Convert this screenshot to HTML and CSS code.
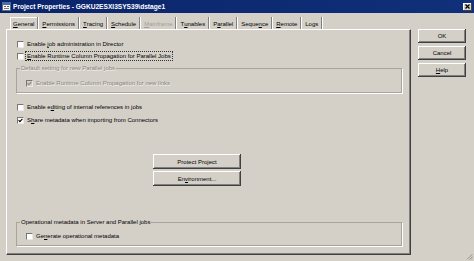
FILE: index.html
```html
<!DOCTYPE html>
<html lang="en">
<head>
    <meta charset="UTF-8">
    <title>Project Properties</title>
    <link rel="stylesheet" href="styles.css">
</head>
<body>
    <div class="window">
        <div class="titlebar">
            <svg class="app-icon" width="9" height="9" viewBox="0 0 9 9">
                <rect x="0.5" y="0.5" width="8" height="8" fill="#f4f4f4" stroke="#5a6a8a"/>
                <rect x="1" y="1" width="7" height="2" fill="#3a6ec8"/>
                <rect x="2" y="4" width="2" height="1" fill="#c83a2a"/>
                <rect x="5" y="4" width="2" height="1" fill="#2a8a3a"/>
                <rect x="2" y="6" width="5" height="1" fill="#7a7a7a"/>
            </svg>
            <span class="title">Project Properties - GGKU2ESXI3SYS39\dstage1</span>
            <span class="close">
                <svg width="9" height="8" viewBox="0 0 9 8">
                    <path d="M2.5 1.5 L6.5 5.5 M6.5 1.5 L2.5 5.5" stroke="#000" stroke-width="1.2"/>
                </svg>
            </span>
        </div>

        <div class="client">
            <div class="sheet">
                <div class="tabs">
                    <span class="tab active"><u>G</u>eneral</span>
                    <span class="tab"><u>P</u>ermissions</span>
                    <span class="tab"><u>T</u>racing</span>
                    <span class="tab"><u>S</u>chedule</span>
                    <span class="tab disabled"><u>M</u>ainframe</span>
                    <span class="tab">T<u>u</u>nables</span>
                    <span class="tab">P<u>a</u>rallel</span>
                    <span class="tab">Seque<u>n</u>ce</span>
                    <span class="tab"><u>R</u>emote</span>
                    <span class="tab">Logs</span>
                </div>

                <div class="page">
                    <div class="check">
                        <span class="box"></span>
                        <span class="label">Enable <u>j</u>ob administration in Director</span>
                    </div>
                    <div class="check">
                        <span class="box"></span>
                        <span class="label focus"><u>E</u>nable Runtime Column Propagation for Parallel Jobs</span>
                    </div>

                    <fieldset class="group muted">
                        <legend>Default setting for new Parallel jobs</legend>
                        <div class="check inner">
                            <span class="box checked disabled">
                                <svg width="5" height="5" viewBox="0 0 5 5"><path d="M0.6 2.2 L1.9 3.6 L4.4 0.8" fill="none" stroke="#8d8a84" stroke-width="1.1"/></svg>
                            </span>
                            <span class="label">Enable Runtime Column Propagation for new links</span>
                        </div>
                    </fieldset>

                    <div class="check spaced">
                        <span class="box"></span>
                        <span class="label">Enable e<u>d</u>iting of internal references in jobs</span>
                    </div>
                    <div class="check tight">
                        <span class="box checked">
                            <svg width="5" height="5" viewBox="0 0 5 5"><path d="M0.6 2.2 L1.9 3.6 L4.4 0.8" fill="none" stroke="#000" stroke-width="1.1"/></svg>
                        </span>
                        <span class="label">S<u>h</u>are metadata when importing from Connectors</span>
                    </div>

                    <div class="page-buttons">
                        <button class="btn wide">Protect Project</button>
                        <button class="btn wide">En<u>v</u>ironment...</button>
                    </div>

                    <fieldset class="group bottom">
                        <legend>Operational metadata in Server and Parallel jobs</legend>
                        <div class="check inner">
                            <span class="box"></span>
                            <span class="label">Ge<u>n</u>erate operational metadata</span>
                        </div>
                    </fieldset>
                </div>
            </div>

            <div class="actions">
                <button class="btn">OK</button>
                <button class="btn">Cancel</button>
                <button class="btn"><u>H</u>elp</button>
            </div>
        </div>

        <svg class="grip" width="7" height="7" viewBox="0 0 7 7">
            <path d="M6.5 1 L1 6.5 M6.5 3.5 L3.5 6.5 M6.5 5.5 L5.5 6.5" stroke="#9a968e" stroke-width="1"/>
        </svg>
    </div>
</body>
</html>
```

FILE: styles.css
```css
* {
    box-sizing: border-box;
}
body {
    margin: 0;
    width: 474px;
    height: 261px;
    overflow: hidden;
    background-color: #d4d0c8;
    font-family: "Liberation Sans", Arial, sans-serif;
    font-size: 6px;
    color: #000;
}
u {
    text-decoration-thickness: 0.5px;
    text-underline-offset: 1px;
}
.window {
    position: relative;
    width: 474px;
    height: 261px;
}
.titlebar {
    height: 13px;
    display: flex;
    align-items: center;
    padding: 0 2px 0 2px;
    background: linear-gradient(to right, #0a246a, #10307a);
    color: #fff;
}
.app-icon {
    display: block;
    flex: none;
}
.title {
    margin-left: 2px;
    font-weight: bold;
    font-size: 6.6px;
    white-space: nowrap;
}
.close {
    margin-left: auto;
    width: 9px;
    height: 8px;
    display: flex;
    background-color: #d4d0c8;
    box-shadow: inset -1px -1px #404040, inset 1px 1px #fff;
}
.close svg {
    display: block;
}
.client {
    display: flex;
    padding: 4px 0 0 6px;
}
.sheet {
    width: 405px;
    flex: none;
}
.tabs {
    display: flex;
    height: 12px;
    padding-left: 4px;
}
.tab {
    display: flex;
    align-items: center;
    padding: 1px 3px 0 3px;
    margin-right: 1px;
    border-right: 1px solid #808080;
    box-shadow: 1px 0 0 #fff;
    white-space: nowrap;
}
.tab.active {
    box-shadow: 1px 0 0 #fff, inset 1px 1px 0 #fff;
}
.tab.disabled {
    color: #a29f98;
}
.page {
    height: 226px;
    padding-top: 8px;
    border: 1px solid;
    border-color: #fff #404040 #404040 #fff;
    box-shadow: inset -1px -1px 0 #808080;
}
.check {
    display: flex;
    align-items: center;
    height: 12px;
    margin-left: 10px;
    white-space: nowrap;
}
.check.spaced {
    margin-top: 8px;
}
.check.tight {
    margin-top: 1px;
}
.check.inner {
    margin-left: 6px;
}
.box {
    width: 7px;
    height: 7px;
    flex: none;
    display: flex;
    align-items: center;
    justify-content: center;
    background-color: #fff;
    border: 1px solid;
    border-color: #7a7770 #ebe9e5 #ebe9e5 #7a7770;
}
.box.disabled {
    background-color: #d4d0c8;
}
.box svg {
    display: block;
}
.label {
    margin-left: 3px;
    line-height: 8px;
}
.label.focus {
    margin-left: 2px;
    padding: 0 1px;
    outline: 1px dotted #333;
}
.group {
    min-width: 0;
    margin: 2px 8px 0 9px;
    padding: 5px 8px 3px 3px;
    border: 1px solid #a8a49c;
    box-shadow: 1px 1px 0 #fff;
}
.group legend {
    padding: 0 1px;
    line-height: 8px;
}
.group.muted legend,
.group.muted .label {
    color: #86837d;
    text-shadow: 0.5px 0.5px 0 #f4f3f0;
}
.group.bottom {
    margin-top: 32px;
    padding-top: 4px;
}
.page-buttons {
    display: flex;
    flex-direction: column;
    gap: 2px;
    margin: 28px 0 0 146px;
}
.btn {
    width: 48px;
    height: 14px;
    padding: 0;
    border: none;
    background-color: #d4d0c8;
    font-family: inherit;
    font-size: 6px;
    color: #000;
    box-shadow: inset -1px -1px #404040, inset 1px 1px #fff, inset -2px -2px #808080;
}
.btn.wide {
    width: 88px;
    height: 15px;
}
.actions {
    display: flex;
    flex-direction: column;
    gap: 3px;
    margin: 12px 0 0 7px;
}
.grip {
    position: absolute;
    right: 1px;
    bottom: 1px;
    display: block;
}
```
